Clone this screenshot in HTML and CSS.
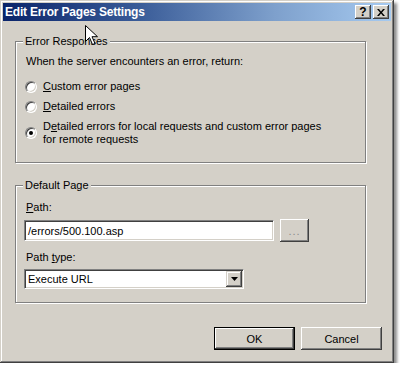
FILE: index.html
```html
<!DOCTYPE html>
<html lang="en">
<head>
  <meta charset="UTF-8" />
  <title>Edit Error Pages Settings</title>
  <link rel="stylesheet" href="styles.css">
</head>
<body>
  <div class="window">
    <div class="titlebar">
      <span class="title">Edit Error Pages Settings</span>
      <div class="caption-btns">
        <span class="cap-btn help">?</span>
        <span class="cap-btn">
          <svg width="8" height="7" viewBox="0 0 8 7"><path d="M0 0h2l2 2.5L6 0h2L5 3.5 8 7H6L4 4.5 2 7H0l3-3.5z" fill="#000"/></svg>
        </span>
      </div>
    </div>

    <div class="content">
      <fieldset class="group group-responses">
        <legend>Error Responses</legend>
        <p class="intro">When the server encounters an error, return:</p>
        <div class="radio-row">
          <span class="radio"></span>
          <span><u>C</u>ustom error pages</span>
        </div>
        <div class="radio-row">
          <span class="radio"></span>
          <span><u>D</u>etailed errors</span>
        </div>
        <div class="radio-row">
          <span class="radio checked"></span>
          <span>D<u>e</u>tailed errors for local requests and custom error pages<br>for remote requests</span>
        </div>
      </fieldset>

      <fieldset class="group group-default">
        <legend>Default Page</legend>
        <div class="field-label"><u>P</u>ath:</div>
        <div class="path-row">
          <div class="textbox">/errors/500.100.asp</div>
          <span class="btn browse">...</span>
        </div>
        <div class="field-label">Path <u>t</u>ype:</div>
        <div class="select">
          <span class="select-value">Execute URL</span>
          <span class="select-arrow">
            <svg width="7" height="4" viewBox="0 0 7 4"><path d="M0 0h7L3.5 4z" fill="#000"/></svg>
          </span>
        </div>
      </fieldset>

      <div class="actions">
        <span class="btn dialog-btn default">OK</span>
        <span class="btn dialog-btn">Cancel</span>
      </div>
    </div>
  </div>

  <!-- mouse pointer -->
  <svg class="cursor" width="13" height="21" viewBox="0 0 13 21">
    <path d="M0.5 0.5v16l4-4 3 7 2.5-1-3-6.8h5.5z" fill="#fff" stroke="#000" stroke-width="1"/>
  </svg>
</body>
</html>
```
FILE: styles.css
```css
* {
  box-sizing: border-box;
}

body {
  margin: 0;
  background: #fff;
  font-family: "Liberation Sans", Arial, sans-serif;
  font-size: 11px;
  color: #000;
}

.window {
  width: 394px;
  height: 363px;
  padding: 3px;
  background: #d4d0c8;
  box-shadow:
    inset -1px -1px 0 #404040,
    inset 1px 1px 0 #d4d0c8,
    inset -2px -2px 0 #808080,
    inset 2px 2px 0 #fff,
    3px 3px 3px rgba(0, 0, 0, 0.45);
}

.titlebar {
  height: 18px;
  display: flex;
  align-items: center;
  justify-content: space-between;
  padding: 0 2px 0 2px;
  background: linear-gradient(to right, #0a246a 0%, #3a5c98 35%, #7ea0cc 70%, #a6caf0 100%);
}

.title {
  color: #fff;
  font-weight: bold;
  font-size: 12px;
  letter-spacing: -0.2px;
}

.caption-btns {
  display: flex;
  gap: 2px;
}

.cap-btn {
  width: 16px;
  height: 14px;
  display: flex;
  align-items: center;
  justify-content: center;
  background: #d4d0c8;
  box-shadow:
    inset -1px -1px 0 #404040,
    inset 1px 1px 0 #fff,
    inset -2px -2px 0 #808080;
}

.cap-btn.help {
  font-weight: bold;
  font-size: 12px;
  line-height: 14px;
}

.content {
  padding: 14px 0 0 12px;
}

.group {
  margin: 0;
  padding: 0 9px;
  width: 351px;
  border: 1px solid #808080;
  box-shadow: inset 1px 1px 0 #fff, 1px 1px 0 #fff;
}

.group legend {
  padding: 0 2px;
  margin-left: -2px;
  line-height: 13px;
  background: #d4d0c8;
}

.group-responses {
  height: 128px;
}

.group-default {
  height: 124px;
  margin-top: 16px;
}

.intro {
  margin: 7px 0 0 1px;
  line-height: 13px;
}

.radio-row {
  display: flex;
  align-items: center;
  gap: 6px;
  margin-top: 7px;
  line-height: 13px;
}

.radio-row:first-of-type {
  margin-top: 12px;
}

.radio {
  flex: none;
  width: 12px;
  height: 12px;
  border-radius: 50%;
  background: #fff;
  border: 1px solid;
  border-color: #808080 #fff #fff #808080;
  box-shadow: inset 1px 1px 0 #404040, inset -1px -1px 0 #d4d0c8;
  position: relative;
}

.radio.checked::after {
  content: "";
  position: absolute;
  left: 3px;
  top: 3px;
  width: 4px;
  height: 4px;
  border-radius: 50%;
  background: #000;
}

.field-label {
  margin: 9px 0 0 1px;
  line-height: 13px;
}

.path-row {
  display: flex;
  align-items: center;
  gap: 6px;
  margin-top: 5px;
  margin-left: -1px;
}

.textbox,
.select {
  height: 21px;
  background: #fff;
  border: 1px solid;
  border-color: #808080 #fff #fff #808080;
  box-shadow: inset 1px 1px 0 #404040, inset -1px -1px 0 #d4d0c8;
  display: flex;
  align-items: center;
  padding-left: 3px;
}

.textbox {
  width: 250px;
}

.btn {
  display: flex;
  align-items: center;
  justify-content: center;
  background: #d4d0c8;
  box-shadow:
    inset -1px -1px 0 #404040,
    inset 1px 1px 0 #fff,
    inset -2px -2px 0 #808080;
}

.browse {
  width: 29px;
  height: 23px;
  color: #8a8a8a;
  letter-spacing: 1px;
}

.select {
  width: 220px;
  height: 20px;
  margin: 5px 0 0 -1px;
  justify-content: space-between;
  padding-right: 1px;
}

.select-arrow {
  width: 16px;
  height: 16px;
  display: flex;
  align-items: center;
  justify-content: center;
  background: #d4d0c8;
  box-shadow:
    inset -1px -1px 0 #404040,
    inset 1px 1px 0 #d4d0c8,
    inset -2px -2px 0 #808080,
    inset 2px 2px 0 #fff;
}

.actions {
  display: flex;
  justify-content: flex-end;
  gap: 6px;
  margin: 24px 9px 0 0;
}

.dialog-btn {
  width: 81px;
  height: 23px;
}

.dialog-btn.default {
  border: 1px solid #000;
  box-shadow:
    inset -1px -1px 0 #404040,
    inset 1px 1px 0 #fff,
    inset -2px -2px 0 #808080;
}

.cursor {
  position: absolute;
  left: 85px;
  top: 25px;
}
```
